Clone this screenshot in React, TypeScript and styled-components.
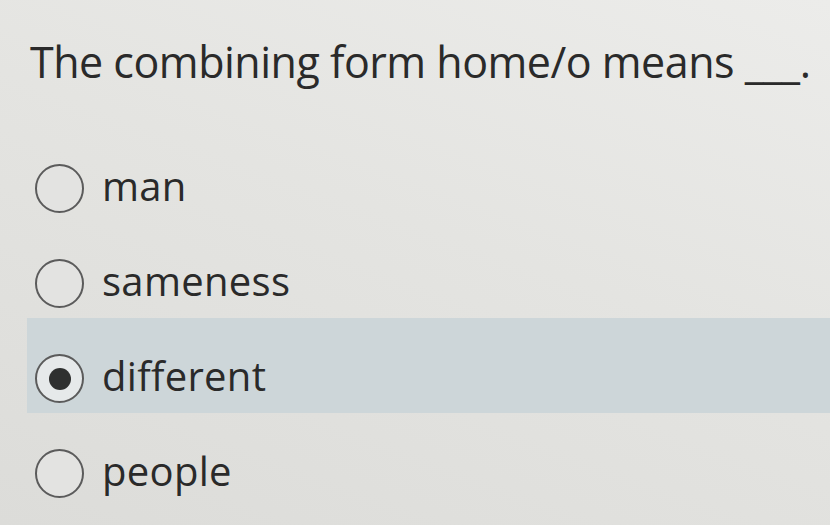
import React, { useState } from "react";
import styled, { createGlobalStyle } from "styled-components";

const GlobalStyle = createGlobalStyle`
  html, body {
    margin: 0;
    padding: 0;
  }
  body {
    width: 830px;
    height: 525px;
    overflow: hidden;
    background: linear-gradient(200deg, #ececea 0%, #e4e4e1 45%, #dcdcd9 100%);
    font-family: "Open Sans", "Liberation Sans", sans-serif;
    color: #2a2a2a;
  }
`;

const Page = styled.div`
  display: flex;
  flex-direction: column;
  height: 525px;
`;

const Question = styled.h1`
  margin: 0;
  padding: 37px 0 0 30px;
  height: 128px;
  box-sizing: border-box;
  font-size: 43px;
  font-weight: 500;
  line-height: 50px;
  letter-spacing: -0.5px;
  white-space: nowrap;
`;

const Options = styled.div`
  display: flex;
  flex-direction: column;
  margin-left: 27px;
`;

const Option = styled.label<{ $selected: boolean }>`
  display: flex;
  align-items: flex-end;
  gap: 18px;
  height: 95px;
  box-sizing: border-box;
  padding: 0 0 10px 8px;
  background: ${(p) => (p.$selected ? "#cdd6d9" : "transparent")};
  cursor: pointer;
`;

const Radio = styled.span<{ $checked: boolean }>`
  flex: none;
  width: 45px;
  height: 45px;
  border-radius: 50%;
  border: 2.5px solid #5b5b5b;
  background: ${(p) => (p.$checked ? "#e6e9ea" : "#e3e3e1")};
  display: flex;
  align-items: center;
  justify-content: center;
  &::after {
    content: "";
    width: 22px;
    height: 22px;
    border-radius: 50%;
    background: #2f3030;
    display: ${(p) => (p.$checked ? "block" : "none")};
  }
`;

const OptionText = styled.span`
  font-size: 40px;
  font-weight: 500;
  line-height: 50px;
  letter-spacing: 0.3px;
  padding-bottom: 2px;
`;

const choices = ["man", "sameness", "different", "people"];

export default function App() {
  const [picked, setPicked] = useState("different");
  return (
    <Page>
      <GlobalStyle />
      <Question>The combining form home/o means ___.</Question>
      <Options>
        {choices.map((c) => (
          <Option key={c} $selected={picked === c} onClick={() => setPicked(c)}>
            <Radio $checked={picked === c} />
            <OptionText>{c}</OptionText>
          </Option>
        ))}
      </Options>
    </Page>
  );
}
